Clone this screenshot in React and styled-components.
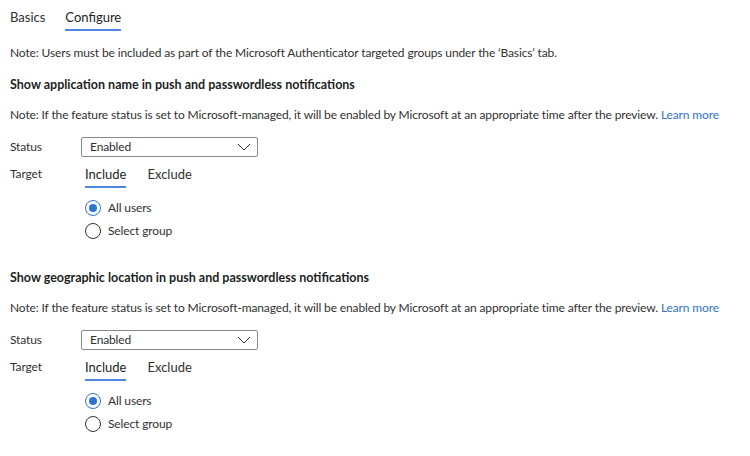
import React, { useState } from 'react';
import styled, { createGlobalStyle } from 'styled-components';

const GlobalStyle = createGlobalStyle`
	html, body {
		margin: 0;
		padding: 0;
		background: #ffffff;
	}
	body {
		font-family: 'Lato', 'Open Sans', sans-serif;
		color: #323130;
		font-size: 12px;
		letter-spacing: -0.13px;
	}
`;

const Page = styled.div`
	padding: 0 10px;
	width: 750px;
	box-sizing: border-box;
`;

const TabBar = styled.div`
	display: flex;
	gap: ${(p) => p.gap}px;
	margin-left: ${(p) => p.offset || 0}px;
`;

const Tab = styled.div`
	font-size: 13px;
	letter-spacing: 0;
	line-height: 18px;
	padding: ${(p) => (p.small ? '0 0 3px' : '8px 0 3px')};
	border-bottom: 2px solid ${(p) => (p.active ? '#4f86de' : 'transparent')};
	color: ${(p) => (p.active ? '#201f1e' : '#323130')};
	cursor: pointer;
`;

const Note = styled.p`
	margin: ${(p) => p.top}px 0 0;
	line-height: 18px;
	white-space: nowrap;
`;

const Link = styled.a`
	color: #2f74d0;
	text-decoration: none;
`;

const Section = styled.section`
	margin-top: ${(p) => p.top}px;
`;

const Heading = styled.h2`
	margin: 0;
	font-size: 12.5px;
	font-weight: 700;
	letter-spacing: 0;
	line-height: 18px;
	color: #201f1e;
`;

const FormRow = styled.div`
	display: flex;
	align-items: ${(p) => (p.alignTop ? 'flex-start' : 'center')};
	margin-top: ${(p) => p.top}px;
`;

const Label = styled.div`
	width: 71px;
	flex-shrink: 0;
	line-height: 18px;
`;

const Select = styled.div`
	width: 177px;
	height: 20px;
	box-sizing: border-box;
	border: 1px solid #8a8886;
	border-radius: 2px;
	display: flex;
	align-items: center;
	justify-content: space-between;
	padding: 0 6px 0 8px;
	line-height: 18px;
	cursor: pointer;
`;

const RadioList = styled.div`
	display: flex;
	flex-direction: column;
	gap: 7px;
	margin: 12px 0 0 75px;
`;

const RadioRow = styled.label`
	display: flex;
	align-items: center;
	gap: 7px;
	height: 16px;
	line-height: 16px;
	cursor: pointer;
`;

const RadioCircle = styled.span`
	width: 16px;
	height: 16px;
	box-sizing: border-box;
	border-radius: 50%;
	border: 1px solid ${(p) => (p.checked ? '#2f74d0' : '#323130')};
	display: flex;
	align-items: center;
	justify-content: center;
	&::after {
		content: '';
		width: 8px;
		height: 8px;
		border-radius: 50%;
		background: ${(p) => (p.checked ? '#2f74d0' : 'transparent')};
	}
`;

const Chevron = () => (
	<svg width="14" height="8" viewBox="0 0 14 8" fill="none">
		<path d="M1 1l6 6 6-6" stroke="#323130" strokeWidth="1" />
	</svg>
);

function FeatureSection({ title, top }) {
	const [choice, setChoice] = useState('all');
	return (
		<Section top={top}>
			<Heading>{title}</Heading>
			<Note top={12}>
				Note: If the feature status is set to Microsoft-managed, it will be enabled by Microsoft at an
				appropriate time after the preview. <Link href="#">Learn more</Link>
			</Note>
			<FormRow top={13}>
				<Label>Status</Label>
				<Select>
					<span>Enabled</span>
					<Chevron />
				</Select>
			</FormRow>
			<FormRow top={8} alignTop>
				<Label>Target</Label>
				<TabBar gap={21} offset={4}>
					<Tab small active>Include</Tab>
					<Tab small>Exclude</Tab>
				</TabBar>
			</FormRow>
			<RadioList>
				<RadioRow onClick={() => setChoice('all')}>
					<RadioCircle checked={choice === 'all'} />
					All users
				</RadioRow>
				<RadioRow onClick={() => setChoice('group')}>
					<RadioCircle checked={choice === 'group'} />
					Select group
				</RadioRow>
			</RadioList>
		</Section>
	);
}

export default function App() {
	return (
		<Page>
			<GlobalStyle />
			<TabBar gap={20}>
				<Tab>Basics</Tab>
				<Tab active>Configure</Tab>
			</TabBar>
			<Note top={13}>
				Note: Users must be included as part of the Microsoft Authenticator targeted groups under the ‘Basics’ tab.
			</Note>
			<FeatureSection top={14} title="Show application name in push and passwordless notifications" />
			<FeatureSection top={30} title="Show geographic location in push and passwordless notifications" />
		</Page>
	);
}
